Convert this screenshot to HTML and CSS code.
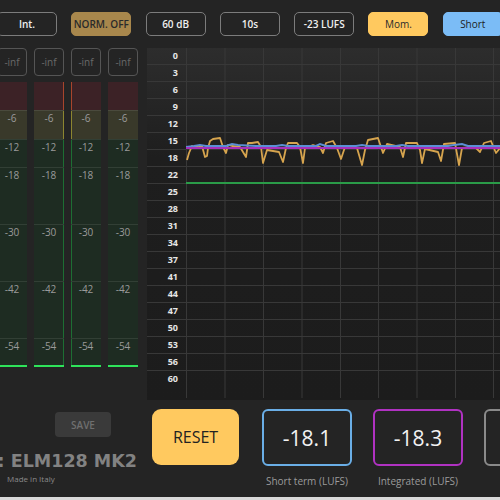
FILE: index.html
```html
<!DOCTYPE html>

<html>
<head>
    <link rel="stylesheet" href="styles.css">
</head>

<body>
    <header class="toolbar">
        <div class="btn">Int.</div>
        <div class="btn btn-norm">NORM. OFF</div>
        <div class="btn">60 dB</div>
        <div class="btn">10s</div>
        <div class="btn">-23 LUFS</div>
        <div class="btn btn-mom">Mom.</div>
        <div class="btn btn-short">Short</div>
    </header>

    <main class="main">
        <div class="meters">
            <div class="meter">
                <div class="peak">-inf</div>
                <div class="bar">
                    <div class="seg red h6 first"></div>
                    <div class="seg yellow h6">-6</div>
                    <div class="seg green h6">-12</div>
                    <div class="seg green h12">-18</div>
                    <div class="seg green h12">-30</div>
                    <div class="seg green h12">-42</div>
                    <div class="seg green h6">-54</div>
                    <div class="floor"></div>
                </div>
            </div>
            <div class="meter edge-right">
                <div class="peak">-inf</div>
                <div class="bar">
                    <div class="seg red h6 first"></div>
                    <div class="seg yellow h6">-6</div>
                    <div class="seg green h6">-12</div>
                    <div class="seg green h12">-18</div>
                    <div class="seg green h12">-30</div>
                    <div class="seg green h12">-42</div>
                    <div class="seg green h6">-54</div>
                    <div class="floor"></div>
                </div>
            </div>
            <div class="meter edge-left">
                <div class="peak">-inf</div>
                <div class="bar">
                    <div class="seg red h6 first"></div>
                    <div class="seg yellow h6">-6</div>
                    <div class="seg green h6">-12</div>
                    <div class="seg green h12">-18</div>
                    <div class="seg green h12">-30</div>
                    <div class="seg green h12">-42</div>
                    <div class="seg green h6">-54</div>
                    <div class="floor"></div>
                </div>
            </div>
            <div class="meter">
                <div class="peak">-inf</div>
                <div class="bar">
                    <div class="seg red h6 first"></div>
                    <div class="seg yellow h6">-6</div>
                    <div class="seg green h6">-12</div>
                    <div class="seg green h12">-18</div>
                    <div class="seg green h12">-30</div>
                    <div class="seg green h12">-42</div>
                    <div class="seg green h6">-54</div>
                    <div class="floor"></div>
                </div>
            </div>
        </div>

        <div class="graph">
            <div class="scale-row"><span>0</span></div>
            <div class="scale-row"><span>3</span></div>
            <div class="scale-row"><span>6</span></div>
            <div class="scale-row"><span>9</span></div>
            <div class="scale-row"><span>12</span></div>
            <div class="scale-row"><span>15</span></div>
            <div class="scale-row"><span>18</span></div>
            <div class="scale-row"><span>22</span></div>
            <div class="scale-row"><span>25</span></div>
            <div class="scale-row"><span>28</span></div>
            <div class="scale-row"><span>31</span></div>
            <div class="scale-row"><span>34</span></div>
            <div class="scale-row"><span>37</span></div>
            <div class="scale-row"><span>41</span></div>
            <div class="scale-row"><span>44</span></div>
            <div class="scale-row"><span>47</span></div>
            <div class="scale-row"><span>50</span></div>
            <div class="scale-row"><span>53</span></div>
            <div class="scale-row"><span>56</span></div>
            <div class="scale-row last"><span>60</span></div>

            <!-- history plot drawn over the scale rows -->
            <svg class="plot" width="321" height="352" viewBox="0 0 321 352">
                <g stroke="#383838" stroke-width="1">
                    <line x1="0.5" y1="0" x2="0.5" y2="350"/>
                    <line x1="39" y1="0" x2="39" y2="350"/>
                    <line x1="77.5" y1="0" x2="77.5" y2="350"/>
                    <line x1="116" y1="0" x2="116" y2="350"/>
                    <line x1="154.5" y1="0" x2="154.5" y2="350"/>
                    <line x1="192.5" y1="0" x2="192.5" y2="350"/>
                    <line x1="231" y1="0" x2="231" y2="350"/>
                    <line x1="269.5" y1="0" x2="269.5" y2="350"/>
                    <line x1="307.5" y1="0" x2="307.5" y2="350"/>
                </g>
                <line x1="0" y1="135" x2="321" y2="135" stroke="#2a9b48" stroke-width="2"/>
                <polyline fill="none" stroke="#d6a44e" stroke-width="1.8" stroke-linejoin="round"
                    points="1,112 3,105 6,98 9,99 12,99 16,98 19,109 21,108 22,100 24,93 27,91 34,90 37,99 40,105 42,97 46,98 54,99 57,104 60,109 62,95 66,95 72,94 75,99 77,115 81,102 87,103 93,104 97,114 100,100 102,95 111,95 114,99 117,115 119,100 127,97 134,99 137,105 140,95 147,93 151,100 155,111 159,99 171,100 176,117 179,102 182,92 192,90 197,105 201,96 214,99 217,109 220,95 231,95 234,102 236,115 239,101 252,104 255,113 258,96 269,95 273,117 276,100 289,99 294,104 298,95 305,93 307,98 310,105 314,100 321,97"/>
                <polyline fill="none" stroke="#5b8fd6" stroke-width="2"
                    points="0,99 8,98 14,97 20,98 40,98 46,96 52,97 70,98 90,98 96,97 102,98 130,98 134,96 140,98 170,98 176,97 182,98 210,98 216,97 222,98 262,98 268,97 276,96 282,98 321,98"/>
                <line x1="0" y1="100" x2="321" y2="100" stroke="#a82fba" stroke-width="2"/>
            </svg>
        </div>
    </main>

    <footer class="bottom">
        <div class="brand">
            <div class="save">SAVE</div>
            <div class="model"><span>Preset: ELM128 MK2</span></div>
            <div class="made">Made in Italy</div>
        </div>
        <div class="reset">RESET</div>
        <div class="readings">
            <div class="reading">
                <div class="reading-box short-term">-18.1</div>
                <div class="reading-label">Short term (LUFS)</div>
            </div>
            <div class="reading">
                <div class="reading-box integrated">-18.3</div>
                <div class="reading-label">Integrated (LUFS)</div>
            </div>
            <div class="reading">
                <div class="reading-box"></div>
            </div>
        </div>
    </footer>
    <div class="edge"></div>
</body>
</html>
```

FILE: styles.css
```css
body {
    margin: 0;
    width: 500px;
    height: 500px;
    overflow: hidden;
    background: #242424;
    font-family: "Open Sans", Arial, sans-serif;
    color: #eeeeee;
}

/* top row of toggles */
.toolbar {
    height: 48px;
    box-sizing: border-box;
    padding-top: 12px;
    display: flex;
    align-items: flex-start;
    gap: 14.3px;
}
.btn {
    flex: 0 0 60px;
    height: 24px;
    box-sizing: border-box;
    border: 1.5px solid #7c7c7c;
    border-radius: 5px;
    display: flex;
    align-items: center;
    justify-content: center;
    font-size: 10px;
    font-weight: 600;
    color: #f0f0f0;
}
.btn:first-child {
    margin-left: -3px;
}
.btn-norm {
    background: #a8874c;
    border-color: #a8874c;
    color: #2a2a2a;
}
.btn-mom {
    background: #ffc95f;
    border-color: #ffc95f;
    color: #2a2a2a;
    font-weight: normal;
}
.btn-short {
    background: #7bbcf6;
    border-color: #7bbcf6;
    color: #1d1d1d;
    font-weight: normal;
}

.main {
    display: flex;
    height: 352px;
}

/* level meters */
.meters {
    flex: 0 0 147px;
    display: flex;
    gap: 7px;
}
.meter {
    flex: 0 0 30px;
    display: flex;
    flex-direction: column;
}
.meter:first-child {
    margin-left: -3px;
}
.peak {
    height: 28px;
    box-sizing: border-box;
    border: 1.5px solid #555555;
    border-radius: 4px;
    margin-bottom: 6px;
    display: flex;
    align-items: center;
    justify-content: center;
    font-size: 10px;
    color: #696969;
}
.bar {
    display: flex;
    flex-direction: column;
}
.seg {
    box-sizing: border-box;
    border-top: 1px solid rgba(255, 255, 255, 0.09);
    text-align: center;
    font-size: 10px;
    line-height: 12px;
    padding-top: 1px;
    color: #9a9a9a;
}
.seg.first {
    border-top: none;
}
.h6 { height: 28.4px; }
.h12 { height: 56.8px; }
.red { background: #3c2226; --edge: #a8452c; }
.yellow { background: #39392a; --edge: #8c8530; }
.green { background: #1e2c22; --edge: #1d6e33; }
.edge-right .seg {
    box-shadow: inset -1px 0 0 var(--edge);
}
.edge-left .seg {
    box-shadow: inset 1px 0 0 var(--edge);
}
.floor {
    height: 2px;
    margin-top: -1px;
    background: #2ee35a;
}

/* loudness history */
.graph {
    position: relative;
    flex: 0 0 360px;
    background: linear-gradient(#2d2d2d 0px, #1e1e1e 110px, #1c1c1c 100%);
}
.scale-row {
    height: 17px;
    box-sizing: border-box;
    border-bottom: 1px solid #383838;
}
.scale-row.last {
    border-bottom: none;
}
.scale-row span {
    display: block;
    width: 31px;
    text-align: right;
    line-height: 16px;
    font-size: 9px;
    font-weight: bold;
    color: #e6e6e6;
}
.plot {
    position: absolute;
    left: 39px;
    top: 0;
}

/* bottom controls */
.bottom {
    display: flex;
    height: 97px;
}
.brand {
    flex: 0 0 147px;
    display: flex;
    flex-direction: column;
}
.save {
    margin: 12px 0 0 55px;
    width: 56px;
    height: 25px;
    border-radius: 4px;
    background: #3a3a3a;
    color: #6f6f6f;
    font-size: 10px;
    font-weight: 600;
    display: flex;
    align-items: center;
    justify-content: center;
}
.model {
    margin-top: 14px;
    width: 137px;
    overflow: hidden;
    display: flex;
    justify-content: flex-end;
    white-space: nowrap;
    font-family: "DejaVu Sans", sans-serif;
    font-weight: bold;
    font-size: 17.5px;
    line-height: 21px;
    color: #828282;
}
.made {
    margin-top: 2px;
    padding-left: 7px;
    font-size: 8px;
    line-height: 10px;
    color: #8a8a8a;
}
.reset {
    flex: 0 0 87px;
    height: 56px;
    margin: 9px 0 0 5px;
    border-radius: 9px;
    background: #ffc95f;
    color: #222222;
    font-size: 16px;
    display: flex;
    align-items: center;
    justify-content: center;
}
.readings {
    display: flex;
    gap: 21px;
    margin-left: 23px;
}
.reading {
    flex: 0 0 90px;
}
.reading-box {
    height: 57px;
    margin-top: 9px;
    box-sizing: border-box;
    border: 2px solid #8a8a8a;
    border-radius: 6px;
    display: flex;
    align-items: center;
    justify-content: center;
    font-size: 21px;
    color: #f2f2f2;
}
.short-term { border-color: #6aaee6; }
.integrated { border-color: #b032c2; }
.reading-label {
    margin-top: 9px;
    text-align: center;
    font-size: 10px;
    line-height: 12px;
    color: #9b9b9b;
    white-space: nowrap;
}
.edge {
    height: 3px;
    background: #d9d9d9;
}
```
